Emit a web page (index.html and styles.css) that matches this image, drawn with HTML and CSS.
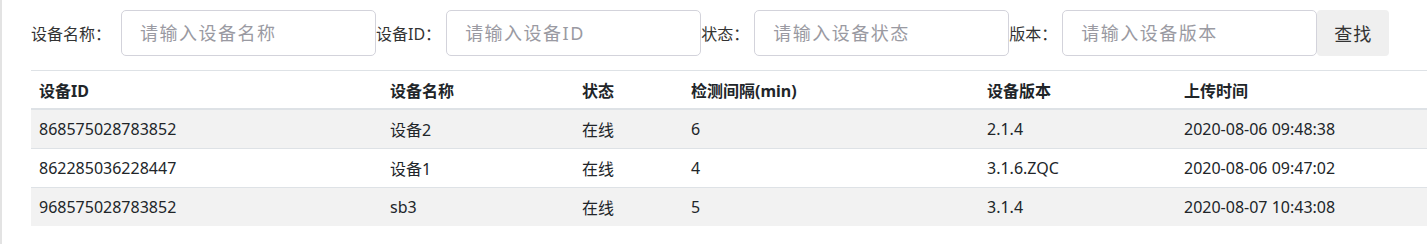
FILE: index.html
```html
<!DOCTYPE html>
<html lang="zh-CN">
<head>
  <meta charset="UTF-8">
  <meta name="viewport" content="width=device-width, initial-scale=1">
  <title>设备列表</title>
  <link rel="stylesheet" href="styles.css">
</head>
<body>

<div class="page">
  <form class="search">
    <label class="label label-first">设备名称：</label>
    <input type="text" class="input" placeholder="请输入设备名称" />
    <label class="label">设备ID：</label>
    <input type="text" class="input" placeholder="请输入设备ID" />
    <label class="label">状态：</label>
    <input type="text" class="input" placeholder="请输入设备状态" />
    <label class="label">版本：</label>
    <input type="text" class="input" placeholder="请输入设备版本" />
    <button type="button" class="button">查找</button>
  </form>

  <table class="table">
    <colgroup>
      <col class="col-id">
      <col class="col-name">
      <col class="col-state">
      <col class="col-interval">
      <col class="col-version">
      <col class="col-time">
    </colgroup>
    <thead>
      <tr>
        <th>设备ID</th>
        <th>设备名称</th>
        <th>状态</th>
        <th>检测间隔(min)</th>
        <th>设备版本</th>
        <th>上传时间</th>
      </tr>
    </thead>
    <tbody>
      <tr>
        <td>868575028783852</td>
        <td>设备2</td>
        <td>在线</td>
        <td>6</td>
        <td>2.1.4</td>
        <td>2020-08-06 09:48:38</td>
      </tr>
      <tr>
        <td>862285036228447</td>
        <td>设备1</td>
        <td>在线</td>
        <td>4</td>
        <td>3.1.6.ZQC</td>
        <td>2020-08-06 09:47:02</td>
      </tr>
      <tr>
        <td>968575028783852</td>
        <td>sb3</td>
        <td>在线</td>
        <td>5</td>
        <td>3.1.4</td>
        <td>2020-08-07 10:43:08</td>
      </tr>
    </tbody>
  </table>
</div>

</body>
</html>
```

FILE: styles.css
```css
/* base */
body {
  font-family: "Noto Sans", "Noto Sans CJK SC", sans-serif;
  margin: 0;
  padding: 0;
  background-color: #fff;
  color: #212529;
}

.page {
  border-left: 2px solid #e3e3e3;
  padding: 10px 0 0 29px;
  min-height: 234px;
}

/* search bar */
.search {
  display: flex;
  align-items: center;
  height: 46px;
  margin: 0 0 14px;
}

.label {
  font-size: 16px;
  color: #333;
  padding-right: 5px;
  white-space: nowrap;
}

.label-first {
  padding-right: 10px;
}

.input {
  box-sizing: border-box;
  width: 255px;
  height: 46px;
  padding: 0 18px;
  border: 1px solid #d3d3db;
  border-radius: 5px;
  font-family: inherit;
  font-size: 18px;
  letter-spacing: 1.5px;
  color: #333;
  outline: none;
}

.input::placeholder {
  color: #9a9aa2;
}

.button {
  width: 72px;
  height: 46px;
  border: none;
  border-radius: 4px;
  background-color: #efefef;
  font-family: inherit;
  font-size: 18px;
  letter-spacing: 1px;
  color: #333;
  cursor: pointer;
}

/* table */
.table {
  width: 1396px;
  table-layout: fixed;
  border-collapse: collapse;
  font-size: 16px;
}

.col-id { width: 351px; }
.col-name { width: 192px; }
.col-state { width: 109px; }
.col-interval { width: 296px; }
.col-version { width: 197px; }
.col-time { width: 251px; }

.table th,
.table td {
  text-align: left;
  padding: 0 8px;
  height: 38px;
  border-top: 1px solid #dee2e6;
  white-space: nowrap;
}

.table th {
  height: 37px;
  font-weight: bold;
  border-bottom: 2px solid #dee2e6;
}

.table tbody tr:nth-child(odd) {
  background-color: #f2f2f2;
}
```
